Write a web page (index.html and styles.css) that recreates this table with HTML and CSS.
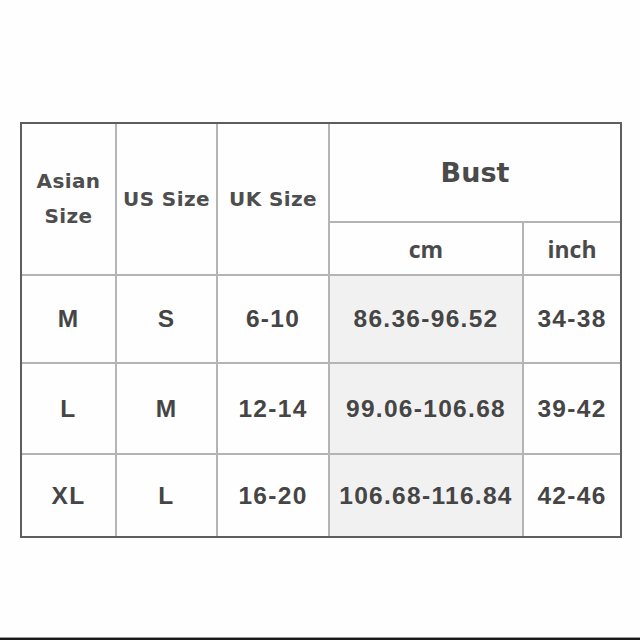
FILE: index.html
```html
<!DOCTYPE html>
<html>
<head>
<meta charset="utf-8">
<link rel="stylesheet" href="styles.css">
</head>
<body>
<main class="page">
  <table class="size-table">
    <colgroup>
      <col class="c1"><col class="c2"><col class="c3"><col class="c4"><col class="c5">
    </colgroup>
    <thead>
      <tr class="h1">
        <th rowspan="2" class="hand">Asian<br>Size</th>
        <th rowspan="2" class="hand">US Size</th>
        <th rowspan="2" class="hand">UK Size</th>
        <th colspan="2" class="bust">Bust</th>
      </tr>
      <tr class="h2">
        <th class="unit">cm</th>
        <th class="unit">inch</th>
      </tr>
    </thead>
    <tbody>
      <tr class="r1"><td>M</td><td>S</td><td>6-10</td><td class="shade">86.36-96.52</td><td>34-38</td></tr>
      <tr class="r2"><td>L</td><td>M</td><td>12-14</td><td class="shade">99.06-106.68</td><td>39-42</td></tr>
      <tr class="r3"><td>XL</td><td>L</td><td>16-20</td><td class="shade">106.68-116.84</td><td>42-46</td></tr>
    </tbody>
  </table>
  <div class="bottom-bar"></div>
</main>
</body>
</html>
```

FILE: styles.css
```css
html, body {
  margin: 0;
  padding: 0;
  background: #fefefe;
}
.page {
  display: flex;
  flex-direction: column;
  height: 640px;
  padding: 122px 0 0 20px;
  box-sizing: border-box;
}
.size-table {
  border-collapse: separate;
  border-spacing: 0;
  border: 2px solid #5e5e5e;
  table-layout: fixed;
  width: 602px;
  color: #474747;
}
.c1 { width: 95px; }
.c2 { width: 101px; }
.c3 { width: 112px; }
.c4 { width: 194px; }
.c5 { width: 96px; }
.size-table th,
.size-table td {
  box-sizing: border-box;
  padding: 0;
  border-right: 2px solid #b4b4b4;
  border-bottom: 2px solid #b4b4b4;
  text-align: center;
  vertical-align: middle;
}
.size-table tr > :last-child { border-right: none; }
.size-table tbody tr:last-child td { border-bottom: none; }
.h1 th { height: 99px; }
.h2 th { height: 53px; }
.r1 td { height: 88px; }
.r2 td { height: 91px; }
.r3 td { height: 81px; }
.hand {
  font-family: "DejaVu Sans", sans-serif;
  font-weight: bold;
  font-size: 20px;
  letter-spacing: 0.4px;
  line-height: 35px;
  color: #4e4e4e;
}
.bust {
  font-family: "DejaVu Sans", sans-serif;
  font-weight: bold;
  font-size: 27px;
  color: #4a4a4a;
  padding-bottom: 4px;
}
.unit {
  font-family: "Open Sans", sans-serif;
  font-weight: 700;
  font-size: 23px;
  color: #4a4a4a;
}
.size-table td {
  font-family: "Liberation Sans", Arial, sans-serif;
  font-weight: bold;
  font-size: 24.5px;
  letter-spacing: 1.3px;
  color: #454545;
}
.size-table td.shade { background: #f1f1f1; }
.bottom-bar {
  margin-top: auto;
  margin-left: -20px;
  height: 3px;
  border-top: 1px solid #9a9a9a;
  background: #1a1a1a;
  box-sizing: border-box;
}
```
